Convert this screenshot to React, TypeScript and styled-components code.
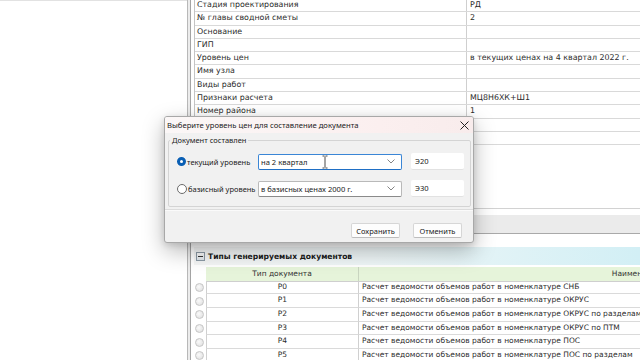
import styled, { createGlobalStyle } from "styled-components";

const GlobalStyle = createGlobalStyle`
  html, body {
    margin: 0;
    padding: 0;
    background: #fff;
  }
  body {
    width: 640px;
    height: 360px;
    overflow: hidden;
  }
`;

const props = [
  { name: "Стадия проектирования", value: "РД" },
  { name: "№ главы сводной сметы", value: "2" },
  { name: "Основание", value: "" },
  { name: "ГИП", value: "" },
  { name: "Уровень цен", value: "в текущих ценах на 4 квартал 2022 г." },
  { name: "Имя узла", value: "" },
  { name: "Виды работ", value: "" },
  { name: "Признаки расчета", value: "МЦ8Н6ХК+Ш1" },
  { name: "Номер района", value: "1" },
  { name: "", value: "" },
  { name: "", value: "" },
];

const docs = [
  { code: "P0", title: "Расчет ведомости объемов работ в номенклатуре СНБ" },
  { code: "P1", title: "Расчет ведомости объемов работ в номенклатуре ОКРУС" },
  { code: "P2", title: "Расчет ведомости объемов работ в номенклатуре ОКРУС по разделам" },
  { code: "P3", title: "Расчет ведомости объемов работ в номенклатуре ОКРУС по ПТМ" },
  { code: "P4", title: "Расчет ведомости объемов работ в номенклатуре ПОС" },
  { code: "P5", title: "Расчет ведомости объемов работ в номенклатуре ПОС по разделам" },
];

export default function App() {
  return (
    <>
      <GlobalStyle />
      <Screen>
        <LeftPane />
        <Splitter />
        <Content>
          <PropTable>
            {props.map((p, i) => (
              <PropRow key={i}>
                <PropName>{p.name}</PropName>
                <PropValue>{p.value}</PropValue>
              </PropRow>
            ))}
          </PropTable>
          <Memo />
          <GrayBand />
          <SectionHeader>
            <Toggle />
            <SectionTitle>Типы генерируемых документов</SectionTitle>
          </SectionHeader>
          <DocTable>
            <DocRow>
              <RadioCell />
              <HeadCell>Тип документа</HeadCell>
              <HeadCell>Наименование</HeadCell>
            </DocRow>
            {docs.map((d) => (
              <DocRow key={d.code}>
                <RadioCell>
                  <RowRadio />
                </RadioCell>
                <CodeCell>{d.code}</CodeCell>
                <TitleCell>{d.title}</TitleCell>
              </DocRow>
            ))}
          </DocTable>
        </Content>

        <Dialog>
          <TitleBar>
            <DialogTitle>Выберите уровень цен для составление документа</DialogTitle>
            <svg width="9" height="9" viewBox="0 0 9 9">
              <path d="M0.5 0.5L8.5 8.5M8.5 0.5L0.5 8.5" stroke="#222" strokeWidth="1" />
            </svg>
          </TitleBar>
          <DialogBody>
            <GroupBox>
              <Legend>Документ составлен</Legend>
              <ChoiceRow>
                <ChoiceLabel>
                  <Radio checked />
                  текущий уровень
                </ChoiceLabel>
                <Combo focused>
                  <ComboText>на 2 квартал</ComboText>
                  <Caret width="6" height="14" viewBox="0 0 6 14">
                    <path d="M3 1.5v11M0.5 1h2M3.5 1h2M0.5 13h2M3.5 13h2" stroke="#333" fill="none" strokeWidth="0.9" />
                  </Caret>
                  <Chevron />
                </Combo>
                <TextBox>Э20</TextBox>
              </ChoiceRow>
              <ChoiceRow>
                <ChoiceLabel>
                  <Radio />
                  базисный уровень
                </ChoiceLabel>
                <Combo>
                  <ComboText>в базисных ценах 2000 г.</ComboText>
                  <Chevron />
                </Combo>
                <TextBox>Э30</TextBox>
              </ChoiceRow>
            </GroupBox>
          </DialogBody>
          <Footer>
            <Button>Сохранить</Button>
            <Button>Отменить</Button>
          </Footer>
        </Dialog>
      </Screen>
    </>
  );
}

function Chevron() {
  return (
    <ChevronSvg width="8" height="5" viewBox="0 0 8 5">
      <path d="M0.5 0.5L4 4L7.5 0.5" stroke="#777" fill="none" strokeWidth="0.9" />
    </ChevronSvg>
  );
}

const Screen = styled.div`
  position: relative;
  width: 640px;
  height: 360px;
  overflow: hidden;
  display: flex;
  background: #fff;
`;

const LeftPane = styled.div`
  width: 187px;
  flex: none;
  border-top: 1px solid #e2e2e2;
  box-sizing: border-box;
`;

const Splitter = styled.div`
  width: 2px;
  flex: none;
  border-left: 1px solid #b8b8b8;
  border-right: 1px solid #a4a4a4;
  background: #ececec;
`;

const Content = styled.div`
  flex: 1;
  min-width: 0;
  overflow: hidden;
  padding-left: 3px;
  display: flex;
  flex-direction: column;
  font-family: "DejaVu Sans", Verdana, sans-serif;
  font-size: 7.5px;
  color: #2b2b2b;
`;

const PropTable = styled.div`
  margin-top: -1px;
  width: 600px;
  border-left: 1px solid #c4c4c4;
  font-size: 7.9px;
`;

const PropRow = styled.div`
  display: grid;
  grid-template-columns: 272px 1fr;
  height: 13.3px;
  box-sizing: border-box;
  border-bottom: 1px solid #d9d9d9;
`;

const PropName = styled.div`
  padding-left: 2px;
  border-right: 1px solid #cfcfcf;
  line-height: 12.3px;
  white-space: nowrap;
`;

const PropValue = styled.div`
  padding-left: 3px;
  line-height: 12.3px;
  white-space: nowrap;
`;

const Memo = styled.div`
  height: 63px;
  flex: none;
  border-bottom: 1px solid #d2d2d2;
`;

const GrayBand = styled.div`
  margin-top: 6px;
  height: 18px;
  flex: none;
  background: #ebebeb;
  border-bottom: 1px solid #a9a9a9;
`;

const SectionHeader = styled.div`
  margin-top: 13px;
  height: 18px;
  flex: none;
  display: flex;
  align-items: center;
  gap: 3px;
  padding-left: 2px;
  background: linear-gradient(90deg, #f5f6f6 0%, #eef6f7 40%, #d2eff5 100%);
`;

const Toggle = styled.div`
  position: relative;
  width: 7px;
  height: 7px;
  border: 1px solid #8c9aa6;
  background: linear-gradient(#fdfdfd, #dfe5ea);
  &::after {
    content: "";
    position: absolute;
    left: 1px;
    right: 1px;
    top: 3px;
    height: 1px;
    background: #333;
  }
`;

const SectionTitle = styled.span`
  font-weight: bold;
  font-size: 7.6px;
  color: #1a1a1a;
`;

const DocTable = styled.div`
  margin-top: 2px;
  width: 730px;
`;

const DocRow = styled.div`
  display: grid;
  grid-template-columns: 12px 153px 1fr;
  height: 13.6px;
`;

const RadioCell = styled.div`
  display: flex;
  align-items: center;
  padding-left: 1px;
`;

const RowRadio = styled.div`
  width: 7px;
  height: 7px;
  border-radius: 50%;
  border: 1px solid #c6c6c6;
  background: radial-gradient(circle at 40% 40%, #fafafa, #dcdcdc);
`;

const HeadCell = styled.div`
  background: #e6f4da;
  text-align: center;
  line-height: 13.6px;
  border-right: 1px solid #c9d5c0;
  border-bottom: 1px solid #cfcfcf;
  box-sizing: border-box;
  color: #333;
`;

const CodeCell = styled.div`
  text-align: center;
  line-height: 12.6px;
  border-left: 1px solid #d0d0d0;
  border-right: 1px solid #d0d0d0;
  border-bottom: 1px solid #dadada;
  box-sizing: border-box;
`;

const TitleCell = styled.div`
  padding-left: 3px;
  line-height: 12.6px;
  border-bottom: 1px solid #dadada;
  box-sizing: border-box;
  white-space: nowrap;
`;

const Dialog = styled.div`
  position: absolute;
  left: 164px;
  top: 116px;
  width: 310px;
  height: 127px;
  box-sizing: border-box;
  display: flex;
  flex-direction: column;
  background: #f1f1f1;
  border: 1px solid #a8a8a8;
  border-radius: 3px;
  box-shadow: 0 8px 22px rgba(0, 0, 0, 0.28), 0 2px 6px rgba(0, 0, 0, 0.12);
  font-family: "Noto Sans", "Open Sans", sans-serif;
  font-size: 7.6px;
  color: #1b1b1b;
  overflow: hidden;
`;

const TitleBar = styled.div`
  height: 16px;
  flex: none;
  display: flex;
  align-items: center;
  justify-content: space-between;
  padding: 0 4px 0 2px;
  background: linear-gradient(90deg, #fbf7f7 0%, #fbefef 70%, #f8ecec 100%);
`;

const DialogTitle = styled.span`
  font-size: 7.7px;
  white-space: nowrap;
`;

const DialogBody = styled.div`
  flex: 1;
  padding: 2px 3px 2px 3px;
  border-bottom: 1px solid #dcdcdc;
  display: flex;
  flex-direction: column;
`;

const GroupBox = styled.fieldset`
  margin: 0;
  flex: 1;
  padding: 3px 6px 0 8px;
  border: 1px solid #d4d4d4;
  border-radius: 2px;
  display: flex;
  flex-direction: column;
  gap: 11px;
`;

const Legend = styled.legend`
  padding: 0 2px;
  margin-left: -7px;
  font-size: 7.5px;
  color: #222;
`;

const ChoiceRow = styled.div`
  display: grid;
  grid-template-columns: 72px 144px 53px;
  column-gap: 9px;
  align-items: center;
  height: 16px;
  &:first-of-type {
    margin-top: 5px;
  }
`;

const ChoiceLabel = styled.label`
  display: flex;
  align-items: center;
  gap: 1px;
  white-space: nowrap;
  font-size: 7.5px;
`;

const Radio = styled.span<{ checked?: boolean }>`
  width: ${({ checked }) => (checked ? "3px" : "8px")};
  height: ${({ checked }) => (checked ? "3px" : "8px")};
  border-radius: 50%;
  flex: none;
  background: #fff;
  border: ${({ checked }) => (checked ? "3.5px solid #0a5fb4" : "1px solid #6a6a6a")};
`;

const Combo = styled.div<{ focused?: boolean }>`
  position: relative;
  height: 16px;
  box-sizing: border-box;
  display: flex;
  align-items: center;
  padding: 0 6px 0 2px;
  background: #fff;
  border: 1px solid ${({ focused }) => (focused ? "#3a86d6" : "#b9b9b9")};
  border-bottom-color: ${({ focused }) => (focused ? "#1f6fc5" : "#8a8a8a")};
  border-radius: 2px;
`;

const ComboText = styled.span`
  flex: 1;
  white-space: nowrap;
`;

const Caret = styled.svg`
  position: absolute;
  left: 63px;
  top: 0px;
`;

const ChevronSvg = styled.svg`
  flex: none;
`;

const TextBox = styled.div`
  height: 17px;
  box-sizing: border-box;
  display: flex;
  align-items: center;
  padding-left: 4px;
  background: #fff;
  border-bottom: 1px solid #e2e2e2;
  border-radius: 2px;
`;

const Footer = styled.div`
  height: 32px;
  flex: none;
  box-sizing: border-box;
  display: flex;
  align-items: flex-end;
  justify-content: flex-end;
  gap: 13px;
  padding: 0 11px 4px 0;
  border-top: 1px solid #fafafa;
`;

const Button = styled.div`
  width: 49px;
  height: 15px;
  box-sizing: border-box;
  display: flex;
  align-items: center;
  justify-content: center;
  background: #fdfdfd;
  border: 1px solid #d6d6d6;
  border-bottom-color: #bdbdbd;
  border-radius: 2px;
  font-size: 7.5px;
`;
